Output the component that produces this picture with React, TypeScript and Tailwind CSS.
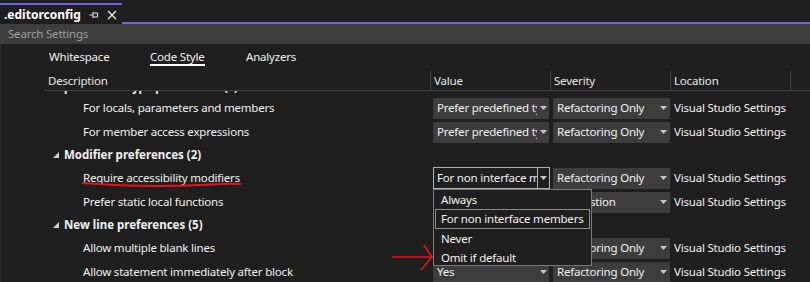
import React from "react";

function DownArrow() {
  return (
    <svg width="7" height="4" viewBox="0 0 7 4">
      <path d="M0 0H7L3.5 4Z" fill="#c8c8c8" />
    </svg>
  );
}

function ValueCombo({ text }: { text: string }) {
  return (
    <div className="flex h-[21px] w-[116px] items-center bg-[#3d3d3d]">
      <div className="flex-1 overflow-hidden whitespace-nowrap pl-[4px]">{text}</div>
      <div className="flex w-[12px] shrink-0 justify-center">
        <DownArrow />
      </div>
    </div>
  );
}

function SeverityCombo({ text }: { text: string }) {
  return (
    <div className="flex h-[21px] w-[117px] items-center bg-[#3d3d3d]">
      <div className="flex-1 overflow-hidden whitespace-nowrap pl-[4px]">{text}</div>
      <div className="flex w-[14px] shrink-0 justify-center">
        <DownArrow />
      </div>
    </div>
  );
}

function FocusedCombo({ text }: { text: string }) {
  return (
    <div className="flex h-[22px] w-[117px] border border-[#b0b0b0] bg-[#1f1f1f]">
      <div className="flex flex-1 items-center overflow-hidden whitespace-nowrap pl-[3px]">{text}</div>
      <div className="flex w-[12px] shrink-0 items-center justify-center border-l border-[#b0b0b0]">
        <DownArrow />
      </div>
    </div>
  );
}

function Triangle() {
  return (
    <svg width="6" height="6" viewBox="0 0 6 6" className="mr-[5px]">
      <path d="M6 0V6H0Z" fill="#d0d0d0" />
    </svg>
  );
}

function ItemRow({
  label,
  value,
  severity,
  focused,
}: {
  label: string;
  value: string;
  severity: string;
  focused?: boolean;
}) {
  return (
    <div className="grid h-[24px] grid-cols-[386px_120px_120px_1fr] items-center">
      <div className="whitespace-nowrap pl-[39px]">{label}</div>
      <div className="pl-[3px]">{focused ? <FocusedCombo text={value} /> : <ValueCombo text={value} />}</div>
      <div className="pl-[3px]">
        <SeverityCombo text={severity} />
      </div>
      <div className="whitespace-nowrap pl-[4px]">Visual Studio Settings</div>
    </div>
  );
}

function GroupRow({ label }: { label: string }) {
  return (
    <div className="flex h-[22px] items-center pl-[9px] font-bold tracking-normal">
      <Triangle />
      <span className="whitespace-nowrap">{label}</span>
    </div>
  );
}

export default function App() {
  return (
    <div className="relative h-[282px] w-[810px] overflow-hidden bg-[#1f1f1f] font-['Noto_Sans',sans-serif] text-[11.5px] leading-[16px] tracking-[-0.2px] text-[#f1f1f1]">
      {/* Document tab strip */}
      <div className="flex h-[24px]">
        <div className="mt-[3px] flex h-[21px] w-[122px] items-center border-t-2 border-[#7160e8] bg-[#1f1f1f] pl-[4px]">
          <span className="text-[12px] font-bold tracking-normal text-white">.editorconfig</span>
          <svg width="10" height="10" viewBox="0 0 10 10" className="ml-[8px]">
            <path d="M0.5 5H4M4 2V8M4 3H8.5V7H4" stroke="#e8e8e8" strokeWidth="1" fill="none" />
          </svg>
          <svg width="10" height="10" viewBox="0 0 10 10" className="ml-[8px]">
            <path d="M1 1L9 9M9 1L1 9" stroke="#e8e8e8" strokeWidth="1.3" />
          </svg>
        </div>
        <div className="flex-1 border-b-2 border-[#7160e8]" />
      </div>

      {/* Search bar */}
      <div className="flex h-[20px] items-center bg-[#3d3d3d] pl-[8px] text-[#a0a0a0]">Search Settings</div>

      <div className="border-l border-[#2a2a2a]">
        {/* Sub tabs */}
        <div className="flex h-[27px] items-start pl-[48px] pt-[5px]">
          <div className="w-[101px]">Whitespace</div>
          <div className="w-[96px]">
            <span className="inline-block border-b-2 border-white leading-[15px]">Code Style</span>
          </div>
          <div>Analyzers</div>
        </div>

        {/* Header */}
        <div className="ml-[43px] grid h-[20px] grid-cols-[386px_120px_120px_120px_1fr] border-b border-[#3f3f3f] text-[#e6e6e6]">
          <div className="flex items-center pl-[4px]">Description</div>
          <div className="flex items-center border-l border-[#3f3f3f] pl-[3px]">Value</div>
          <div className="flex items-center border-l border-[#3f3f3f] pl-[3px]">Severity</div>
          <div className="flex items-center border-l border-[#3f3f3f] pl-[3px]">Location</div>
          <div className="border-l border-[#3f3f3f]" />
        </div>

        {/* List */}
        <div className="ml-[43px]">
          <div className="h-[5px] overflow-hidden">
            <div className="-mt-[12px] whitespace-nowrap pl-[20px] font-bold">predefined type preferences (2)</div>
          </div>
          <ItemRow label="For locals, parameters and members" value="Prefer predefined type" severity="Refactoring Only" />
          <ItemRow label="For member access expressions" value="Prefer predefined type" severity="Refactoring Only" />
          <GroupRow label="Modifier preferences (2)" />
          <ItemRow label="Require accessibility modifiers" value="For non interface members" severity="Refactoring Only" focused />
          <ItemRow label="Prefer static local functions" value="Yes" severity="Suggestion" />
          <GroupRow label="New line preferences (5)" />
          <ItemRow label="Allow multiple blank lines" value="Yes" severity="Refactoring Only" />
          <ItemRow label="Allow statement immediately after block" value="Yes" severity="Refactoring Only" />
        </div>
      </div>

      {/* Open dropdown list */}
      <div className="absolute left-[433px] top-[189px] h-[77px] w-[159px] border border-[#7a7a7a] bg-[#1f1f1f] whitespace-nowrap">
        <div className="flex h-[19px] items-center pl-[7px]">Always</div>
        <div className="mx-[1px] flex h-[20px] items-center border border-[#8c8c8c] pl-[5px]">For non interface members</div>
        <div className="flex h-[19px] items-center pl-[7px]">Never</div>
        <div className="flex h-[19px] items-center pl-[7px]">Omit if default</div>
      </div>

      {/* Red annotations */}
      <svg className="pointer-events-none absolute left-0 top-0" width="810" height="282" viewBox="0 0 810 282">
        <path d="M82 183 C 120 186, 160 187, 200 185 S 235 184, 241 184" stroke="#e3131e" strokeWidth="2" fill="none" />
        <path d="M392 257 H432 M424 245 L432 257 L421 270" stroke="#e3131e" strokeWidth="1.6" fill="none" />
      </svg>
    </div>
  );
}
